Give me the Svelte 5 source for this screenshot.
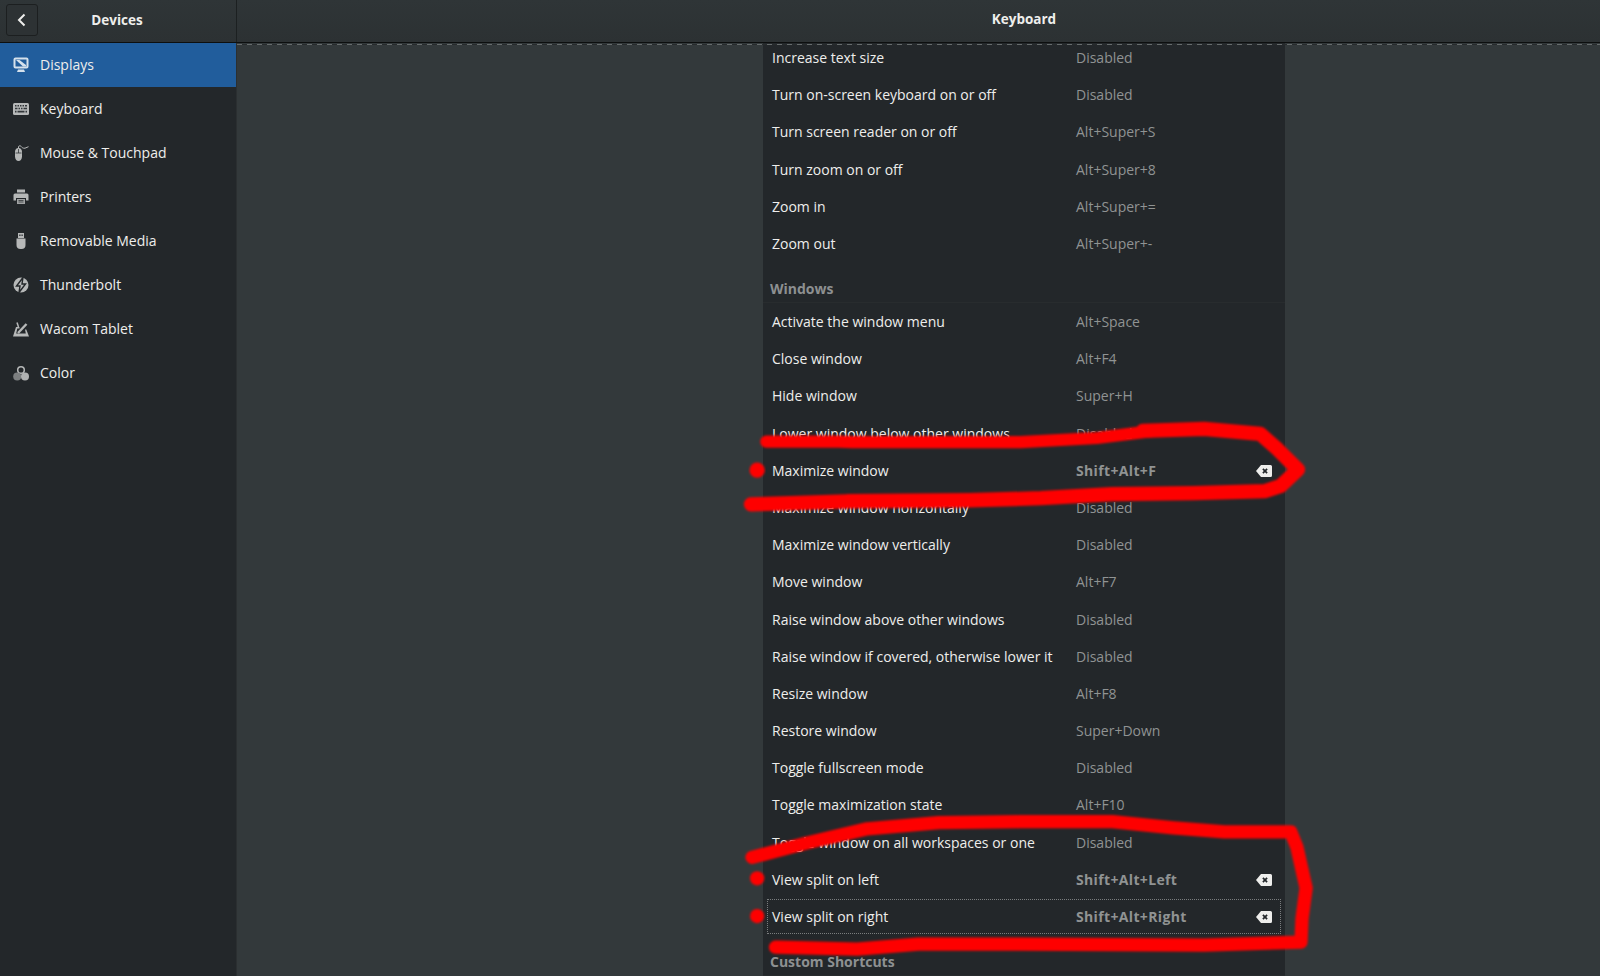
<script>
  const nav = ['Displays','Keyboard','Mouse & Touchpad','Printers','Removable Media','Thunderbolt','Wacom Tablet','Color'];
  const sections = [
    { rows: [
      ['Increase text size','Disabled'],['Turn on-screen keyboard on or off','Disabled'],['Turn screen reader on or off','Alt+Super+S'],
      ['Turn zoom on or off','Alt+Super+8'],['Zoom in','Alt+Super+='],['Zoom out','Alt+Super+-']
    ]},
    { title: 'Windows', rows: [
      ['Activate the window menu','Alt+Space'],['Close window','Alt+F4'],['Hide window','Super+H'],['Lower window below other windows','Disabled'],
      ['Maximize window','Shift+Alt+F',1],['Maximize window horizontally','Disabled'],['Maximize window vertically','Disabled'],['Move window','Alt+F7'],
      ['Raise window above other windows','Disabled'],['Raise window if covered, otherwise lower it','Disabled'],['Resize window','Alt+F8'],['Restore window','Super+Down'],
      ['Toggle fullscreen mode','Disabled'],['Toggle maximization state','Alt+F10'],['Toggle window on all workspaces or one','Disabled'],
      ['View split on left','Shift+Alt+Left',1],['View split on right','Shift+Alt+Right',1,1]
    ]},
    { title: 'Custom Shortcuts', rows: [] }
  ];
</script>

<div class="app">
  <header class="bar">
    <div class="bar-left">
      <button class="back" aria-label="Back">
        <svg width="16" height="16" viewBox="0 0 16 16"><path d="M10.500 2.500 5 8l5.500 5.500" fill="none" stroke="#eeeeec" stroke-width="2"/></svg>
      </button>
      <div class="bar-title">Devices</div>
    </div>
    <div class="bar-right">Keyboard</div>
  </header>
  <div class="body">
    <nav class="side">
      {#each nav as item, i}
        <div class="nav-item" class:active={i === 0}>
          <svg class="nav-icon" width="16" height="16" viewBox="0 0 16 16" fill="currentColor">
            {#if i === 0}
              <path fill-rule="evenodd" d="M2.500.5h11a2 2 0 0 1 2 2v7a2 2 0 0 1-2 2h-11a2 2 0 0 1-2-2v-7a2 2 0 0 1 2-2zM2.500 2.500v7h11v-7z"/>
              <path d="M3 3h3.500l6.500 5v1.500h-3z"/>
              <path d="M5 12.500h6l1 2.500H4z"/>
            {:else if i === 1}
              <rect x="0" y="2" width="16" height="12" rx="1.500"/>
              <path fill="#33373a" d="M2 4h1.500v1.500H2zm2.500 0H6v1.500H4.500zM7 4h1.500v1.500H7zm2.500 0H11v1.500H9.500zM12 4h2v1.500h-2zM2 6.800h2.500v1.500H2zm3.500 0H7v1.500H5.500zm2.500 0h1.500v1.500H8zm2.500 0H14v1.500h-3.500zM2 9.800h1.500v1.700H2zm2.500 0h7v1.700h-7zm8 0H14v1.700h-1.500z"/>
            {:else if i === 2}
              <path d="M5.500 3C3 3 2 4.800 2 7v4.500C2 14 3.500 16 5.500 16S9 14 9 11.500V7c0-2.200-1-4-3.500-4z"/>
              <path d="M2.500 8h6M5.500 4v4" stroke="#33373a" stroke-width=".8" fill="none"/>
              <path d="M5.500 3.500V2c0-1.500 2-1.500 2.700-.5S10 3.500 12 3.200l3.500-1.500" fill="none" stroke="currentColor" stroke-width="1"/>
            {:else if i === 3}
              <path d="M4 .5h8V3.500H4z"/>
              <path d="M2 4.500h12A1.500 1.500 0 0 1 15.500 6v5.500H13V9H3v2.500H.5V6A1.500 1.500 0 0 1 2 4.500z"/>
              <path d="M4 10h8v5H4z" opacity=".85"/>
              <path d="M5.500 11.500h5M5.500 13h5" stroke="#33373a" stroke-width=".8"/>
            {:else if i === 4}
              <path fill-rule="evenodd" d="M5 0h6v5H5zM6.300 1.500v1.500h1.200V1.500zM8.500 1.500v1.500h1.200V1.500z"/>
              <path d="M3.500 5.500h9v6.500a4 4 0 0 1-4 4h-1a4 4 0 0 1-4-4z"/>
            {:else if i === 5}
              <circle cx="8" cy="8" r="7.500"/>
              <path d="M10 .5 3.500 9H7L6 15.500 12.500 7H9z" stroke="#23272a" stroke-width="1.400"/>
            {:else if i === 6}
              <path d="M3 6h3.500v1.500H4.300L3.200 12.500h9.600L12 8.500h1.300L16 15.500H0z"/>
              <path d="M5 12 13.500 3" stroke="currentColor" stroke-width="2.400" fill="none"/>
              <path d="M4 1.500 5.500 6" stroke="currentColor" stroke-width="1.500" fill="none"/>
            {:else}
              <circle cx="8" cy="5" r="3.300" fill="none" stroke="currentColor" stroke-width="1.500"/>
              <circle cx="4.200" cy="11.500" r="4" fill="#7c7f80"/>
              <circle cx="12" cy="11.500" r="4" fill="#b0b2b2"/>
            {/if}
          </svg>
          <span>{item}</span>
        </div>
      {/each}
    </nav>
    <main class="main">
      <div class="dash"></div>
      <div class="panel">
        {#each sections as s}
          {#if s.title}<div class="sec">{s.title}</div>{/if}
          {#each s.rows as r}
            <div class="row" class:focus={r[3]} class:custom={r[2]}>
              <span class="name">{r[0]}</span>
              <span class="key">{r[1]}</span>
              {#if r[2]}
                <svg class="clear" width="16" height="16" viewBox="0 0 16 16"><path fill="#eeeeec" fill-rule="evenodd" d="M5 2h9.500A1.500 1.500 0 0 1 16 3.500v9a1.500 1.500 0 0 1-1.500 1.500H5L0 8zM7.500 5.300 6.300 6.500 7.800 8 6.300 9.500l1.200 1.200L9 9.200l1.500 1.500 1.200-1.200L10.200 8l1.500-1.500-1.200-1.200L9 6.800z"/></svg>
              {/if}
            </div>
          {/each}
        {/each}
      </div>
    </main>
  </div>
  <svg class="ink" viewBox="0 0 1568 956" width="1600" height="976" aria-hidden="true">
    <g fill="none" stroke="#fe0000" stroke-linecap="round" stroke-linejoin="round" filter="url(#b)">
      <path stroke-width="12" d="M751 432.500 H822 L835 433 L1000 433 L1075 429 L1130 422 L1180 420"/>
      <path stroke-width="14" d="M1120 422 L1180 420 L1235 425 L1252 440 L1272 460 L1255 476 L1240 481 L1170 483 L1090 484 L1020 488 L950 490 L830 491 L736 494"/>
      <path stroke-width="13" d="M737 840 L790 826 L850 812 L920 806 L1000 805 L1090 805 L1150 811 L1200 815 L1265 815 L1271 830 L1280 870 L1276 900 L1275 923 L1180 926 L1000 925 L900 925 L840 930 L760 928"/>
    </g>
    <g fill="#fe0000" filter="url(#b)">
      <circle cx="742" cy="460.500" r="7.500"/><circle cx="742" cy="860.500" r="7"/><circle cx="742" cy="897.500" r="7"/>
    </g>
    <defs><filter id="b" x="-5%" y="-5%" width="110%" height="110%"><feGaussianBlur stdDeviation="1"/></filter></defs>
  </svg>
</div>

<style>
  :global(body) { margin: 0; background: #33393b; }
  .app { position: relative; width: 1600px; height: 976px; overflow: hidden; display: flex; flex-direction: column; font-family: "Open Sans", "Noto Sans", sans-serif; font-size: 14px; color: #eeeeec; background: #33393b; }
  .bar { height: 42px; flex: none; display: flex; background: linear-gradient(#2f3537, #2c3133); border-bottom: 1px solid #0d0f0f; }
  .bar-left { width: 237px; flex: none; box-sizing: border-box; border-right: 1px solid #1c2021; display: flex; align-items: center; padding-left: 6px; padding-bottom: 2px; }
  .back { width: 32px; height: 32px; padding: 0; display: flex; align-items: center; justify-content: center; background: #2d3234; border: 1px solid #1c1f20; border-radius: 3px; }
  .bar-title { flex: 1; text-align: center; font-weight: 700; padding-right: 40px; font-size: 13.500px; }
  .bar-right { flex: 1; text-align: center; font-weight: 700; line-height: 38px; font-size: 13.500px; padding-left: 211px; }
  .body { flex: 1; min-height: 0; display: flex; }
  .side { width: 236px; flex: none; background: #23272a; border-right: 1px solid #2b2f31; }
  .nav-item { height: 44px; display: flex; align-items: center; gap: 11px; padding-left: 13px; color: #eeeeec; }
  .nav-item span { margin-bottom: 2px; }
  .nav-icon { color: #b6b8b8; flex: none; }
  .active { background: #215d9c; }
  .active .nav-icon { color: #d5e1ec; }
  .main { flex: 1; min-width: 0; position: relative; overflow: hidden; display: flex; padding-left: 526px; }
  .dash { position: absolute; z-index: 2; left: 0; right: 0; top: 1px; height: 1px; background: repeating-linear-gradient(90deg, #666b6c 0 5px, #282c2e 5px 10px); }
  .panel { width: 522px; flex: none; background: #23272a; height: calc(100% + 4px); margin-top: -4px; }
  .row { height: 37.200px; display: flex; align-items: center; padding-left: 9px; position: relative; box-sizing: border-box; }
  .name { width: 304px; flex: none; white-space: nowrap; }
  .key { color: #909393; white-space: nowrap; }
  .custom .key { font-weight: 700; letter-spacing: .35px; }
  .clear { position: absolute; right: 13px; top: 11px; }
  .focus { outline: 1px dotted #7a7d7e; outline-offset: -2px; margin: 0 3px; padding-left: 6px; }
  .focus .clear { right: 10px; }
  .sec { height: 40.800px; box-sizing: border-box; padding: 17px 0 0 7px; font-weight: 700; color: #8d9091; border-bottom: 1px solid #282c2e; }
  .ink { position: absolute; inset: 0; pointer-events: none; }
</style>
